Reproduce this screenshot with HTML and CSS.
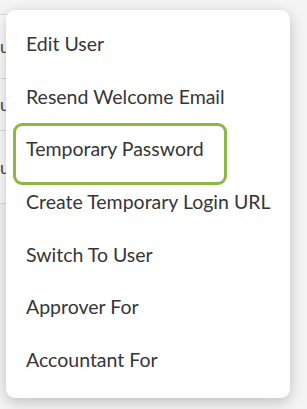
FILE: index.html
```html
<!DOCTYPE html>
<html lang="en">
<head>
    <meta charset="UTF-8">
    <title>User actions</title>
    <link rel="stylesheet" href="styles.css">
</head>
<body>

    <!-- table behind the menu -->
    <div class="table">
        <div class="row row-1"><span class="cell">Menu</span></div>
        <div class="row row-2"><span class="cell">Menu</span></div>
        <div class="row row-3"><span class="cell">Menu</span></div>
    </div>

    <div class="menu">
        <div class="menu-item">Edit User</div>
        <div class="menu-item">Resend Welcome Email</div>
        <div class="menu-item highlight">Temporary Password</div>
        <div class="menu-item">Create Temporary Login URL</div>
        <div class="menu-item">Switch To User</div>
        <div class="menu-item">Approver For</div>
        <div class="menu-item">Accountant For</div>
    </div>

</body>
</html>
```

FILE: styles.css
```css
body {
    margin: 0;
    position: relative;
    width: 307px;
    height: 409px;
    overflow: hidden;
    background-color: #f4f4f4;
    font-family: Lato, "Open Sans", sans-serif;
    color: #333;
}

/* table rows peeking out on the left */
.table {
    padding-top: 14px;
    width: 40px;
}

.row {
    border-top: 1px solid #dcdcdc;
    background-color: #fafafa;
    display: flex;
    align-items: center;
    font-size: 17px;
    color: #444;
}

.row-1 { height: 63px; }
.row-2 { height: 51px; }
.row-3 { height: 72px; border-bottom: 1px solid #dcdcdc; }

.cell {
    margin-left: -34px;
}

/* popup menu */
.menu {
    position: absolute;
    top: 10px;
    left: 6px;
    width: 284px;
    padding: 7px 0 12px;
    box-sizing: border-box;
    background-color: #fff;
    border-radius: 9px;
    box-shadow: 0 4px 14px rgba(0, 0, 0, 0.22);
}

.menu-item {
    position: relative;
    height: 52.7px;
    display: flex;
    align-items: center;
    padding-left: 20px;
    font-size: 19.5px;
    color: #363636;
    white-space: nowrap;
}

/* green focus ring around the chosen item */
.highlight::after {
    content: "";
    position: absolute;
    left: 7px;
    top: 1px;
    width: 214px;
    height: 62px;
    box-sizing: border-box;
    border: 3px solid #8db844;
    border-radius: 9px;
}
```
